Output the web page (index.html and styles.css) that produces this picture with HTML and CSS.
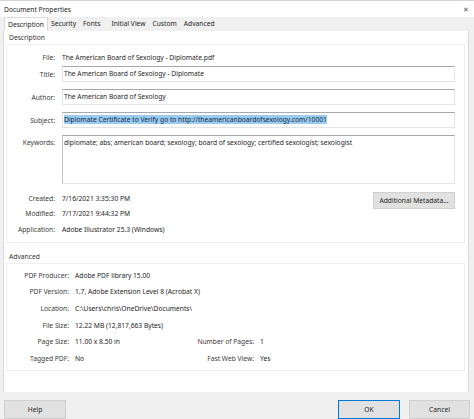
FILE: index.html
```html
<!DOCTYPE html>
<html lang="en">
<head>
    <meta charset="UTF-8">
    <title>Document Properties</title>
    <link rel="stylesheet" href="styles.css">
</head>
<body>
<div class="window">
    <div class="titlebar">
        <span>Document Properties</span>
        <span class="close">&#x2715;</span>
    </div>

    <div class="tabs">
        <div class="tab active">Description</div>
        <div class="tab">Security</div>
        <div class="tab">Fonts</div>
        <div class="tab tab-wide">Initial View</div>
        <div class="tab">Custom</div>
        <div class="tab">Advanced</div>
    </div>

    <div class="panel">
        <!-- Description -->
        <div class="section-label">Description</div>
        <div class="group desc">
            <div class="row row-file">
                <div class="label">File:</div>
                <div class="value">The American Board of Sexology - Diplomate.pdf</div>
            </div>
            <div class="row row-title">
                <div class="label">Title:</div>
                <div class="field">The American Board of Sexology - Diplomate</div>
            </div>
            <div class="row row-gap">
                <div class="label">Author:</div>
                <div class="field">The American Board of Sexology</div>
            </div>
            <div class="row row-gap">
                <div class="label">Subject:</div>
                <div class="field"><span class="selected">Diplomate Certificate to Verify go to http://theamericanboardofsexology.com/10001</span></div>
            </div>
            <div class="row row-gap row-keywords">
                <div class="label">Keywords:</div>
                <div class="field area">diplomate; abs; american board; sexology; board of sexology; certified sexologist; sexologist</div>
            </div>
            <div class="row row-created">
                <div class="label">Created:</div>
                <div class="value">7/16/2021 3:35:30 PM</div>
                <button class="btn btn-meta">Additional Metadata...</button>
            </div>
            <div class="row row-modified">
                <div class="label">Modified:</div>
                <div class="value">7/17/2021 9:44:32 PM</div>
            </div>
            <div class="row">
                <div class="label">Application:</div>
                <div class="value">Adobe Illustrator 25.3 (Windows)</div>
            </div>
        </div>

        <!-- Advanced -->
        <div class="section-label section-adv">Advanced</div>
        <div class="group adv">
            <div class="label">PDF Producer:</div>
            <div class="value span3">Adobe PDF library 15.00</div>
            <div class="label">PDF Version:</div>
            <div class="value span3">1.7, Adobe Extension Level 8 (Acrobat X)</div>
            <div class="label">Location:</div>
            <div class="value span3">C:\Users\chris\OneDrive\Documents\</div>
            <div class="label">File Size:</div>
            <div class="value span3">12.22 MB (12,817,663 Bytes)</div>
            <div class="label">Page Size:</div>
            <div class="value">11.00 x 8.50 in</div>
            <div class="label">Number of Pages:</div>
            <div class="value">1</div>
            <div class="label">Tagged PDF:</div>
            <div class="value">No</div>
            <div class="label">Fast Web View:</div>
            <div class="value">Yes</div>
        </div>
    </div>

    <div class="footer">
        <button class="btn btn-help">Help</button>
        <button class="btn btn-ok">OK</button>
        <button class="btn btn-cancel">Cancel</button>
    </div>
</div>
</body>
</html>
```

FILE: styles.css
```css
body {
    margin: 0;
    font-family: "Noto Sans", "Open Sans", sans-serif;
    font-size: 6.7px;
    color: #1e1e1e;
}
.window {
    width: 474px;
    height: 419px;
    display: flex;
    flex-direction: column;
    background-color: #f0f0f0;
    overflow: hidden;
}
.titlebar {
    height: 16px;
    border-top: 1px solid #d4d4d4;
    background-color: #fff;
    display: flex;
    align-items: center;
    justify-content: space-between;
    padding: 0 5px 0 4px;
}
.close {
    font-size: 7px;
    color: #555;
}
.tabs {
    height: 14px;
    display: flex;
    align-items: stretch;
    padding-left: 4px;
}
.tab {
    padding: 0 3px;
    line-height: 14px;
    margin-right: 1px;
}
.tab-wide {
    margin-left: 4px;
}
.tab.active {
    background-color: #fff;
    border: 1px solid #dadada;
    border-bottom: none;
    line-height: 13px;
    padding: 0 3px;
    margin-right: 0;
}
.panel {
    height: 361px;
    margin-left: 3px;
    width: 464px;
    background-color: #fff;
    border-left: 1px solid #dadada;
    border-right: 1px solid #dadada;
}
.section-label {
    height: 13px;
    line-height: 13px;
    padding-left: 5px;
    color: #333;
}
.section-adv {
    height: 20px;
    line-height: 12px;
    padding-top: 8px;
    box-sizing: border-box;
}
.group {
    margin: 0 3px 0 2px;
    border: 1px solid #efefef;
    box-sizing: border-box;
}
.desc {
    height: 199px;
    padding-top: 4px;
}
.row {
    display: flex;
    height: 16px;
    align-items: center;
}
.row-title {
    margin-top: 1px;
}
.row-gap {
    margin-top: 7px;
}
.row-keywords {
    height: 49px;
    align-items: flex-start;
}
.row-keywords .label {
    padding-top: 3px;
}
.row-created {
    margin-top: 6px;
    position: relative;
}
.row-modified {
    height: 15px;
}
.label {
    color: #3a3a3a;
    text-align: right;
    white-space: nowrap;
}
.desc .label {
    width: 48px;
    margin-right: 7px;
}
.field {
    width: 393px;
    height: 16px;
    box-sizing: border-box;
    border: 1px solid #e4e4e4;
    border-top-color: #a8a8a8;
    padding-left: 1px;
    line-height: 14px;
    white-space: nowrap;
}
.field.area {
    height: 49px;
    border-left-color: #c4c4c4;
    line-height: 12px;
    padding-top: 1px;
}
.selected {
    background-color: #9dcbf0;
    color: #0c2a4a;
}
.btn {
    font-family: inherit;
    font-size: inherit;
    color: #1e1e1e;
    background-color: #e1e1e1;
    border: 1px solid #d0d0d0;
    padding: 0;
    height: 19px;
}
.btn-meta {
    position: absolute;
    right: 9px;
    top: 2px;
    width: 82px;
    height: 17px;
}
.adv {
    height: 108px;
    padding-top: 3px;
    display: grid;
    grid-template-columns: 62px 100px 73px 1fr;
    grid-auto-rows: 16.6px;
    column-gap: 6px;
    align-items: center;
}
.span3 {
    grid-column: span 3;
}
.footer {
    flex: 1;
    display: flex;
    align-items: flex-start;
    padding: 8px 4px 0 4px;
}
.btn-help {
    width: 62px;
}
.btn-ok {
    width: 62px;
    margin-left: auto;
    border-color: #0078d7;
}
.btn-cancel {
    width: 61px;
    margin-left: 9px;
}
```
